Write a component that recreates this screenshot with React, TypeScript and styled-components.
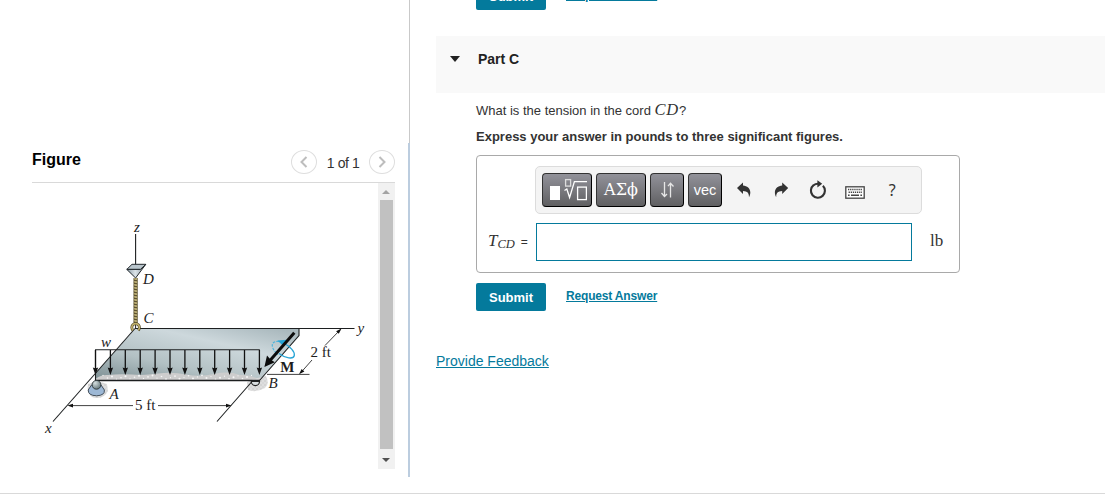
import React from "react";
import styled, { createGlobalStyle, css } from "styled-components";

const loadArrows = Array.from({ length: 12 }, (_, i) => 95.5 + i * 14.9);

const specks = Array.from({ length: 34 }, (_, i) => ({
  x: 103 + i * 4.5,
  y: 375.4 + ((i * 7) % 11) * 0.38,
  r: 0.6 + (i % 3) * 0.2,
}));

const BeamFigure: React.FC = () => (
  <Drawing viewBox="32 183 346 286" width="346" height="286">
    <defs>
      <linearGradient id="plate" x1="0" y1="1" x2="0.9" y2="0">
        <stop offset="0" stopColor="#7b8e92" />
        <stop offset="0.35" stopColor="#b3c1c4" />
        <stop offset="0.7" stopColor="#cdd8dc" />
        <stop offset="1" stopColor="#a9b8bd" />
      </linearGradient>
      <linearGradient id="anchor" x1="0" y1="0" x2="1" y2="0">
        <stop offset="0" stopColor="#8d9da6" />
        <stop offset="0.45" stopColor="#dbe3e8" />
        <stop offset="1" stopColor="#8796a0" />
      </linearGradient>
      <radialGradient id="ball" cx="0.35" cy="0.3" r="0.8">
        <stop offset="0" stopColor="#d5dfe0" />
        <stop offset="1" stopColor="#5c6f73" />
      </radialGradient>
      <pattern
        id="gravel"
        width="4"
        height="4"
        patternUnits="userSpaceOnUse"
      >
        <rect width="4" height="4" fill="#dedede" />
        <circle cx="1" cy="1" r="0.8" fill="#c6c6c6" />
        <circle cx="3" cy="3" r="0.7" fill="#cccccc" />
      </pattern>
    </defs>

    {/* plate */}
    <path d="M135.5 328.5H299V335.5L259.5 380.5H95.5V373Z" fill="url(#plate)" />
    <path
      d="M96 380V378.5Q101 374.5 108 375Q120 373.5 132 374.6T158 373.6T186 374.4T214 374T240 375Q252 374.5 259 380Z"
      fill="#cdcdcd"
    />
    {specks.map(({ x, y, r }) => (
      <circle key={x} cx={x} cy={y} r={r} fill="#f7f7f7" />
    ))}

    {/* ground under the supports */}
    <path
      d="M88 384Q98 380 107 384L108 391Q104 399 95 398Q86 396 88 384Z"
      fill="url(#gravel)"
    />
    <path
      d="M247 382Q256 378 266 376Q270 384 265 388Q256 393 248 390Z"
      fill="url(#gravel)"
    />

    {/* axes and edges */}
    <g stroke="#1c1f20" strokeWidth="1.1" fill="none">
      <path d="M135.6 234V265" />
      <path d="M135 328.5H354.5" />
      <path d="M135 328.5L53 421.5" />
      <path d="M299 328.5V335.5L259.5 380.5" />
      <path d="M252 381.5L217 421.5" />
      <path d="M95.5 350V381" />
      <path d="M95.5 380.6H260" strokeWidth="1.5" />
      <path d="M95 349.7H259.8" />
    </g>

    {loadArrows.map((x) => (
      <g key={x}>
        <path d={`M${x} 350V370`} stroke="#111" strokeWidth="1.3" />
        <path
          d={`M${x - 2.7} 367.6Q${x} 369 ${x + 2.7} 367.6L${x} 375Z`}
          fill="#111"
        />
      </g>
    ))}

    {/* cord CD */}
    <path d="M135.6 278V325" stroke="#5a5030" strokeWidth="4.2" />
    <path
      d="M135.6 278V325"
      stroke="#b5a872"
      strokeWidth="3"
      strokeDasharray="2.1 0.9"
    />
    <path
      d="M134.3 279V325M136.9 280.5V325"
      stroke="#7d6e36"
      strokeWidth="0.7"
      strokeDasharray="1.2 1.8"
    />
    <path
      d="M132 264.3H145.8L140.5 269.4H126.8Z"
      fill="#b9c5cc"
      stroke="#22282c"
      strokeWidth="1"
    />
    <path
      d="M126.8 269.4H140.5L145.8 264.3L135.6 278Z"
      fill="url(#anchor)"
      stroke="#22282c"
      strokeWidth="1"
    />
    <path
      d="M133 330.2A3.8 3.8 0 1 1 138.2 330.2"
      fill="none"
      stroke="#4b421f"
      strokeWidth="2.8"
    />
    <path
      d="M133 330.2A3.8 3.8 0 1 1 138.2 330.2"
      fill="none"
      stroke="#c2b26d"
      strokeWidth="1.6"
    />
    <path d="M135.6 325V329" stroke="#222" strokeWidth="1" />

    {/* supports */}
    <path
      d="M91.5 385H101L104.4 390Q105 395.5 96.5 395.8Q88 395.5 88.2 390Z"
      fill="#9db8d5"
      stroke="#34414d"
      strokeWidth="0.9"
    />
    <circle
      cx="96.5"
      cy="384.8"
      r="4.4"
      fill="url(#ball)"
      stroke="#2d3638"
      strokeWidth="0.9"
    />
    <path
      d="M251.3 381.5A4 4 0 0 0 259.5 381.5Z"
      fill="#d9dee0"
      stroke="#222"
      strokeWidth="1.2"
    />

    {/* dimensions */}
    <g stroke="#2c2c2c" strokeWidth="0.9">
      <path d="M69 405.6H133M158 405.6H230M267 374.4H309.5M300.5 373L312 360M325 345.5L340 330" />
    </g>
    <g fill="#111">
      <path d="M67.5 405.6L73 403.8V407.4Z" />
      <path d="M231.5 405.6L226 403.8V407.4Z" />
      <path d="M299 374.3L301.6 369L304.4 371.6Z" />
      <path d="M341.5 328.6L338.8 333.8L336.1 331.2Z" />
    </g>

    {/* couple moment M */}
    <path
      d="M279 341.5C273.5 341 271.5 343.5 272.5 347C273.3 350 275.5 352.5 278 354.5"
      fill="none"
      stroke="#4db4dc"
      strokeWidth="1.2"
      strokeDasharray="2.6 1.2"
    />
    <path
      d="M284 343.3C290 346.5 295 351.5 294.3 355.5C293.5 359.5 285.5 358.5 279 353.5"
      fill="none"
      stroke="#27a4d5"
      strokeWidth="1.3"
    />
    <path d="M277.5 340.6L286.5 339.8L283.5 346.2Z" fill="#27a4d5" />
    <path d="M294.3 332.8L270 360.5" stroke="#0b0b0b" strokeWidth="3" />
    <path d="M264.4 367L267 355.6L270.5 359.5L274.8 362.2Z" fill="#0b0b0b" />

    <g fill="#1d1d1d" fontFamily='"Liberation Serif", serif' fontSize="15">
      <g fontStyle="italic">
        <text x="134" y="231.5">z</text>
        <text x="143" y="284">D</text>
        <text x="143.5" y="323">C</text>
        <text x="101" y="347">w</text>
        <text x="109.5" y="399">A</text>
        <text x="268.5" y="388">B</text>
        <text x="357.5" y="333">y</text>
        <text x="45" y="433">x</text>
      </g>
      <text x="135" y="410">5 ft</text>
      <text x="310.5" y="357">2 ft</text>
      <text x="280.3" y="372" fontWeight="bold">M</text>
    </g>
  </Drawing>
);

const UndoIcon: React.FC = () => (
  <svg width="14" height="16" viewBox="0 0 14 16">
    <path
      d="M0 6L6 .5V3.4C11.5 3.8 15.5 8.5 12 15.3C12 11 10.5 9.2 6 9V12Z"
      fill="#333"
    />
  </svg>
);

const ResetIcon: React.FC = () => (
  <svg width="18" height="20" viewBox="0 0 18 20">
    <path
      d="M13.9 5.8A7 7 0 1 1 4.6 5.2C5.8 4.2 7 3.8 9 3.8"
      fill="none"
      stroke="#333"
      strokeWidth="2.1"
    />
    <path d="M8.4 .3L13.2 3.8L8.4 7.4Z" fill="#333" />
  </svg>
);

const KeyboardIcon: React.FC = () => (
  <svg width="20" height="13" viewBox="0 0 20 13">
    <rect
      x="0.8"
      y="0.8"
      width="18.4"
      height="11.4"
      fill="#fff"
      stroke="#444"
      strokeWidth="1.3"
    />
    <path
      d="M3 3.6H17M3.6 6.2H17"
      stroke="#444"
      strokeWidth="1.5"
      strokeDasharray="1.3 0.8"
    />
    <path d="M3 9.2H4.6M6 9.2H14M15.4 9.2H17" stroke="#444" strokeWidth="1.4" />
  </svg>
);

const TemplateIcon: React.FC = () => (
  <svg width="40" height="24" viewBox="0 0 40 24">
    <rect x="3" y="8" width="10" height="14" fill="#fff" />
    <g fill="none" stroke="#fff" strokeWidth="1.3">
      <rect x="18.6" y="1.6" width="5" height="6.5" stroke="#ddd" />
      <path d="M17.5 12.5L19.8 11L22.6 19.5L27.4 3.6H40" />
      <rect x="30.6" y="9.1" width="8.8" height="12.5" />
    </g>
  </svg>
);

const ArrowsIcon: React.FC = () => (
  <svg width="14" height="16" viewBox="0 0 14 16">
    <g fill="none" stroke="#e6e6e6" strokeWidth="1.3">
      <path d="M4.5 0V14.5M1.5 11L4.5 14.5L7 12" />
      <path d="M10.5 15.5V1.2M8 4.2L10.5 1.2L13.5 4.5" />
    </g>
  </svg>
);

interface ActionsProps {
  clipped?: boolean;
}

const Actions: React.FC<ActionsProps> = ({ clipped }: ActionsProps) => (
  <ActionRow $clipped={clipped}>
    <Submit>Submit</Submit>
    <RequestLink href="#">Request Answer</RequestLink>
  </ActionRow>
);

const App: React.FC = () => {
  return (
    <>
      <GlobalStyle />
      <Page>
        <FigurePane>
          <FigureHeader>
            <FigureTitle>Figure</FigureTitle>
            <Pager>
              <PagerButton aria-label="Previous">
                <svg width="8" height="12" viewBox="0 0 8 12">
                  <path d="M6.5 1L1.5 6L6.5 11" />
                </svg>
              </PagerButton>
              <PagerText>1 of 1</PagerText>
              <PagerButton aria-label="Next">
                <svg width="8" height="12" viewBox="0 0 8 12">
                  <path d="M1.5 1L6.5 6L1.5 11" />
                </svg>
              </PagerButton>
            </Pager>
          </FigureHeader>
          <FigureBody>
            <BeamFigure />
            <Scrollbar>
              <ScrollArrow $up />
              <ScrollThumb />
              <ScrollArrow />
            </Scrollbar>
          </FigureBody>
        </FigurePane>
        <Divider>
          <DividerTop />
          <DividerHandle />
        </Divider>
        <QuestionPane>
          <Actions clipped />
          <PartHeader>
            <Caret />
            <PartTitle>Part C</PartTitle>
          </PartHeader>
          <Question>
            <Prompt>
              What is the tension in the cord <MathText>CD</MathText>?
            </Prompt>
            <Instruction>
              Express your answer in pounds to three significant figures.
            </Instruction>
            <AnswerBox>
              <Toolbar>
                <ToolButton $wide>
                  <TemplateIcon />
                </ToolButton>
                <ToolButton $wide $greek>
                  ΑΣϕ
                </ToolButton>
                <ToolButton>
                  <ArrowsIcon />
                </ToolButton>
                <ToolButton>vec</ToolButton>
                <IconRow>
                  <IconButton aria-label="Undo">
                    <UndoIcon />
                  </IconButton>
                  <IconButton aria-label="Redo" $flip>
                    <UndoIcon />
                  </IconButton>
                  <IconButton aria-label="Reset">
                    <ResetIcon />
                  </IconButton>
                  <IconButton aria-label="Keyboard shortcuts" $low>
                    <KeyboardIcon />
                  </IconButton>
                  <IconButton aria-label="Help">?</IconButton>
                </IconRow>
              </Toolbar>
              <AnswerRow>
                <Variable>
                  <i>T</i>
                  <small>CD</small>
                  <b>=</b>
                </Variable>
                <AnswerInput />
                <Unit>lb</Unit>
              </AnswerRow>
            </AnswerBox>
          </Question>
          <Actions />
          <Feedback href="#">Provide Feedback</Feedback>
        </QuestionPane>
      </Page>
    </>
  );
};

const GlobalStyle = createGlobalStyle`
  * {
    box-sizing: border-box;
  }

  body {
    margin: 0;
    background: #fff;
    color: #333;
    font-family: "Liberation Sans", Arial, sans-serif;
    overflow: hidden;
  }
`;

const Page = styled.div`
  display: flex;
  height: 494px;
  border-bottom: 1px solid #d9d9d9;
  overflow: hidden;
`;

const FigurePane = styled.section`
  width: 408px;
  padding: 143px 13px 0 32px;
`;

const FigureHeader = styled.header`
  display: flex;
  justify-content: space-between;
  height: 40px;
  border-bottom: 1px solid #d9d9d9;
`;

const FigureTitle = styled.h2`
  margin: 0;
  padding-top: 7px;
  font-size: 16px;
  line-height: 19px;
  color: #000;
`;

const Pager = styled.div`
  display: flex;
  align-items: center;
  height: 38px;
`;

const PagerButton = styled.button`
  display: flex;
  align-items: center;
  justify-content: center;
  width: 26px;
  height: 24px;
  padding: 0 0 1px;
  border: 1px solid #dedede;
  border-radius: 50%;
  background: #fff;

  path {
    fill: none;
    stroke: #bdbdbd;
    stroke-width: 2;
  }
`;

const PagerText = styled.span`
  width: 52px;
  padding-top: 2px;
  font-size: 14px;
  letter-spacing: -0.5px;
  word-spacing: 0.3px;
  text-align: center;
  white-space: nowrap;
`;

const FigureBody = styled.div`
  display: flex;
  height: 286px;
`;

const Drawing = styled.svg`
  display: block;
  flex: none;
`;

const Scrollbar = styled.div`
  display: flex;
  flex-direction: column;
  align-items: center;
  width: 17px;
  padding: 7px 1px 0 0;
  background: #f1f1f1;
`;

const ScrollThumb = styled.div`
  width: 13px;
  height: 249px;
  margin: 6px 0 9px;
  background: #c1c1c1;
`;

const ScrollArrow = styled.span<{ $up?: boolean }>`
  border: 4px solid transparent;
  ${({ $up }) =>
    $up
      ? css`
          border-top: 0;
          border-bottom-color: #a3a3a3;
        `
      : css`
          border-bottom: 0;
          border-top-color: #505050;
        `}
`;

const Divider = styled.div`
  width: 2px;
`;

const DividerTop = styled.div`
  width: 1px;
  height: 143px;
  margin-left: 1px;
  background: #c9c9c9;
`;

const DividerHandle = styled.div`
  width: 2px;
  height: 334px;
  background: #bccddf;
`;

const QuestionPane = styled.main`
  flex: 1;
  padding-left: 26px;
`;

const ActionRow = styled.div<{ $clipped?: boolean }>`
  display: flex;
  align-items: center;
  gap: 20px;
  height: 28px;
  margin: ${({ $clipped }) => ($clipped ? "-18px 0 26px 40px" : "10px 0 0 40px")};
`;

const Submit = styled.button`
  width: 70px;
  height: 28px;
  padding: 0;
  border: 0;
  border-radius: 2px;
  background: #047a9c;
  color: #fff;
  font: bold 13px "Liberation Sans", Arial, sans-serif;
`;

const RequestLink = styled.a`
  padding-bottom: 3px;
  font-size: 12px;
  font-weight: bold;
  letter-spacing: -0.17px;
  color: #047a9c;
`;

const PartHeader = styled.header`
  display: flex;
  height: 57px;
  padding: 15px 0 0 14px;
  background: #f9f9f9;
`;

const Caret = styled.span`
  width: 0;
  height: 0;
  margin-top: 5px;
  border: 5px solid transparent;
  border-top: 6px solid #222;
  border-bottom: 0;
`;

const PartTitle = styled.h3`
  margin: 0 0 0 18px;
  font-size: 14px;
  line-height: 16px;
  color: #222;
`;

const Question = styled.div`
  padding: 7px 0 0 40px;
`;

const Prompt = styled.p`
  margin: 0;
  font-size: 13px;
  line-height: 22px;
  height: 22px;
`;

const MathText = styled.span`
  font-family: "Liberation Serif", serif;
  font-style: italic;
  font-size: 16.5px;
  line-height: 16px;
  letter-spacing: 0.8px;
`;

const Instruction = styled.p`
  margin: 5px 0 7px;
  font-size: 13px;
  font-weight: bold;
  line-height: 20px;
  height: 21px;
`;

const AnswerBox = styled.div`
  width: 484px;
  height: 118px;
  padding: 10px 0 0 11px;
  border: 1px solid #a9a9a9;
  border-radius: 4px;
`;

const Toolbar = styled.div`
  display: flex;
  align-items: center;
  gap: 4px;
  width: 387px;
  height: 48px;
  margin-left: 47px;
  padding-left: 6px;
  border: 1px solid #dcdcdc;
  border-radius: 5px;
  background: #f4f4f4;
`;

const ToolButton = styled.button<{ $wide?: boolean; $greek?: boolean }>`
  display: flex;
  align-items: center;
  justify-content: center;
  width: ${({ $wide }) => ($wide ? 50 : 34)}px;
  height: 34px;
  padding: 0;
  border: 1px solid #333;
  border-right-color: #000;
  border-bottom-color: #000;
  border-radius: 4px;
  background: linear-gradient(#92929a, #606062);
  color: #fff;
  font-family: ${({ $greek }) =>
    $greek ? '"DejaVu Serif", serif' : '"Liberation Sans", sans-serif'};
  font-size: ${({ $greek }) => ($greek ? 16 : 14.5)}px;
  line-height: 28px;
`;

const IconRow = styled.div`
  display: flex;
  margin-left: -1px;
`;

const IconButton = styled.button<{ $flip?: boolean; $low?: boolean }>`
  display: flex;
  align-items: center;
  justify-content: center;
  width: 37.2px;
  height: 30px;
  padding: ${({ $low }) => ($low ? "4px" : "0")} 0 0;
  border: 0;
  background: none;
  color: #333;
  font: 16px "Noto Sans", sans-serif;
  ${({ $flip }) =>
    $flip &&
    css`
      padding-right: 2px;
      transform: scaleX(-1);
    `}
`;

const AnswerRow = styled.div`
  display: flex;
  align-items: center;
  margin-top: 9px;
`;

const Variable = styled.span`
  display: flex;
  align-items: baseline;
  width: 48px;
  margin-top: -3px;
  font-family: "Liberation Serif", serif;
  font-size: 17px;
  line-height: 20px;

  small {
    padding-top: 3px;
    font-size: 12.5px;
    font-style: italic;
    transform: translateY(2px);
  }

  b {
    margin-left: 6px;
    font: 12px "Liberation Sans", sans-serif;
  }
`;

const AnswerInput = styled.input`
  width: 376px;
  height: 38px;
  border: 1px solid #047a9c;
  background: #fff;
  outline: 0;
`;

const Unit = styled.span`
  margin: -2px 0 0 18px;
  font-family: "Liberation Serif", serif;
  font-size: 17px;
`;

const Feedback = styled.a`
  display: inline-block;
  margin-top: 41px;
  font-size: 14px;
  line-height: 18px;
  color: #047a9c;
`;

export default App;
